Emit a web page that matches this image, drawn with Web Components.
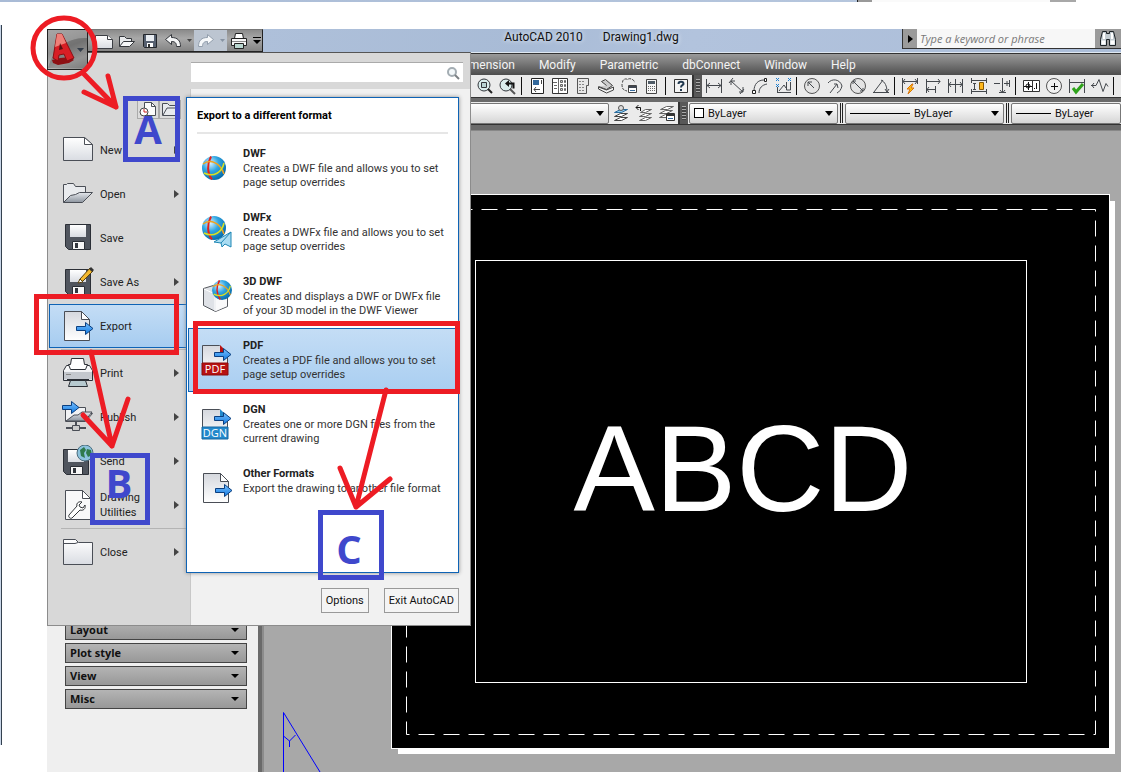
<!DOCTYPE html>
<html lang="en">
<head>
<meta charset="utf-8">
<title>AutoCAD 2010 - Drawing1.dwg</title>
<style>
  html, body { margin: 0; padding: 0; }
  body { background: #fff; font-family: Roboto, "Open Sans", sans-serif; font-size: 11px; color: #1c1c1c; overflow-x: hidden; }
</style>
</head>
<body>
<cad-page></cad-page>

<script>
const define = (name, html) => {
  const tpl = document.createElement('template');
  tpl.innerHTML = html;
  customElements.define(name, class extends HTMLElement {
    constructor() {
      super();
      this.attachShadow({ mode: 'open' }).append(tpl.content.cloneNode(true));
    }
  });
};

/* ---------- icon library ---------- */
const grads = `<defs>
  <linearGradient id="p" x1="0" y1="0" x2="0" y2="1"><stop offset="0" stop-color="#d5d8de"/><stop offset="1" stop-color="#fff"/></linearGradient>
  <linearGradient id="f" x1="0" y1="0" x2="0" y2="1"><stop offset="0" stop-color="#fff"/><stop offset="1" stop-color="#d9dce2"/></linearGradient>
  <linearGradient id="d" x1="0" y1="0" x2="0" y2="1"><stop offset="0" stop-color="#e4e7ec"/><stop offset="1" stop-color="#8d959f"/></linearGradient>
  <linearGradient id="b" x1="0" y1="0" x2="0" y2="1"><stop offset="0" stop-color="#7cc2ff"/><stop offset="1" stop-color="#0f78e0"/></linearGradient>
  <radialGradient id="g" cx=".35" cy=".3" r=".75"><stop offset="0" stop-color="#d8f2ff"/><stop offset=".45" stop-color="#31a6e2"/><stop offset="1" stop-color="#0569a8"/></radialGradient>
</defs>`;
const blueArrow = (x, y) => `<path transform="translate(${x} ${y})" d="M.5 4.500h9v-4l7.500 6-7.500 6v-4h-9z" fill="url(#b)" stroke="#0b3f80"/>`;
const globe = (cx, cy, r) => `<g transform="translate(${cx} ${cy}) scale(${r / 12})"><circle r="12" fill="url(#g)"/>
  <path d="M-3-11.500C-7-4-7 5-2 11.500" fill="none" stroke="#e02020" stroke-width="2"/>
  <path d="M-11-4C-4-9 6-6 10 6" fill="none" stroke="#f2a21c" stroke-width="1.500"/>
  <path d="M-10 5C0 10 8 4 10-5" fill="none" stroke="#d9e021" stroke-width="1.500"/></g>`;
const disk = `<path d="M3.500 3.500h25v25h-22l-3-3z" fill="#50555e" stroke="#2b2f36"/><path d="M8 4h16v12H8z" fill="url(#f)"/><path d="M10.500 20.500h12v8h-12z" fill="#f6f6f6" stroke="#2b2f36"/><path d="M13 22h3v5h-3z" fill="#33373e"/>`;
const sheet = `<path d="M3.500 1.500h17l8 8v21h-25z" fill="url(#p)" stroke="#4a4e56"/><path d="M20.500 1.500v8h8z" fill="#fff" stroke="#4a4e56"/>`;
const tag = (label, color, dark) => `<path d="M1.500 1.500h17l8 8v21h-25z" fill="url(#p)" stroke="#4a4e56"/><path d="M19 1l8 8h-8z" fill="${color}"/><path d="M1 19h26v12H1z" fill="${color}" stroke="${dark}"/><text x="14" y="29" text-anchor="middle" font-family="Open Sans, sans-serif" font-size="11" fill="#fff">${label}</text>${blueArrow(13, 4)}`;
const line = (d, extra = '') => `<path d="${d}" fill="none" stroke="#44484d" ${extra}/>`;

const ICONS = {
  /* 32px menu icons */
  new: [32, `<path d="M1.500 3.500h21l8 7v16h-29z" fill="url(#f)" stroke="#4a4e56"/><path d="M22.500 3.500v7h8z" fill="#fff" stroke="#4a4e56"/>`],
  open: [32, `<path d="M1.500 24.500v-18h3l1-1h6l2 3h10v7" fill="#e9ebee" stroke="#4a4e56"/><path d="M1.500 24.500l7-7 5-1 4-2h13l-10 10z" fill="url(#d)" stroke="#4a4e56"/>`],
  save: [32, `<g transform="translate(0 -1)">${disk}</g>`],
  saveas: [32, disk + `<path d="M18 13l10-11 3 3-10 10-4 1z" fill="#f5b92e" stroke="#5b4310"/><path d="M18 13l3 3-5 1z" fill="#fff" stroke="#5b4310"/><path d="M27 3l2-2 3 3-2 2z" fill="#333"/>`],
  export: [32, `<g transform="translate(-1 0)">${sheet}</g>` + blueArrow(14, 12)],
  print: [32, `<path d="M4.500 8.500h23l3 5v10h-29v-10z" fill="url(#f)" stroke="#2b2f36"/><path d="M6.500 7.500l2 5h15l2-5h-3l-1-6h-12l-1 6z" fill="#fff" stroke="#2b2f36"/><path d="M2 15h28v7H2z" fill="#c4c8ce"/><path d="M4 17.500h5" stroke="#888"/><path d="M5 22h22v2H5z" fill="#2b2f36"/><path d="M8.500 23.500h15l2 6h-19z" fill="#b7cad0" stroke="#2b2f36"/>`],
  publish: [32, `<path d="M3.500 20.500v-14h20v6h7l-7 8z" fill="#f1f2f4" stroke="#4a4e56"/><path d="M4 20l8-6h4l4-3h10l-7 9z" fill="url(#d)" stroke="#4a4e56"/><path d="M14 21v4M4 27h20" stroke="#4a4e56" stroke-width="2"/><path d="M10.500 24.500h7v5h-7z" fill="#ccc" stroke="#4a4e56"/>${blueArrow(0, 0)}`],
  send: [32, `<g transform="translate(-2 1)">${disk}</g><circle cx="23" cy="8" r="8" fill="#8cc3dd" stroke="#4b6b7c"/><path d="M18 5l4-3 2 3-2 3 1 5-4-2zM25 4l4 1 1 5-4 2-2-4z" fill="#2f7a4b"/>`],
  utilities: [32, `<path d="M3.500 1.500h17l8 8v21h-25z" fill="#f8f8f9" stroke="#4a4e56"/><path d="M20.500 1.500v8h8z" fill="#fff" stroke="#4a4e56"/><path d="M7 26l8-9c-1-3 2-5 5-4l-3 3 1 2 3 1 2-3c1 4-2 6-5 5l-8 8c-2 1-4-1-3-3z" fill="#fff" stroke="#33363b"/>`],
  close: [32, `<path d="M1.500 28.500v-25h12l3 3h14v22z" fill="url(#f)" stroke="#4a4e56"/><path d="M2 7.500h11l3-1" fill="none" stroke="#4a4e56"/>`],
  dwf: [32, globe(13, 16, 12)],
  dwfx: [32, globe(13, 12, 12) + `<path d="M13 26l17-10v15l-6-3-3 3-1-4z" fill="#a9dcf2" stroke="#1f87b5"/><path d="M20 27l10-11" stroke="#1f87b5"/>`],
  dwf3d: [32, `<path d="M2.500 8.500l13-4 11 4v18l-12 5-12-6z" fill="#dfe2e7" stroke="#55585e"/><path d="M3 9l11 5v17" fill="none" stroke="#fff"/><path d="M15 14l11-5v17l-11 5z" fill="#f9f9fa"/>` + globe(21, 10, 10)],
  pdf: [32, tag('PDF', '#b81212', '#8c0b0b')],
  dgn: [32, tag('DGN', '#2389cc', '#1766a0')],
  /* quick-access icons */
  qnew: [20, `<path d="M1.500 4.500h12l5 4v9h-17z" fill="url(#f)" stroke="#3b3e44"/><path d="M13.500 4.500v4h5" fill="#fff" stroke="#3b3e44"/>`],
  qopen: [20, `<path d="M2.500 15.500v-10h5l2 2h5v3" fill="#e8eaec" stroke="#33363b"/><path d="M2.500 15.500l4-5h11l-5 5z" fill="#f5f6f7" stroke="#33363b"/>`],
  qsave: [20, `<path d="M3.500 3.500h13v13h-12l-1-1z" fill="#566070" stroke="#23262b"/><path d="M6 4h8v6H6z" fill="#e9edf2"/><path d="M7 12h6v4H7z" fill="#fff"/><path d="M8 13h2v3H8z" fill="#333"/>`],
  qundo: [20, `<path d="M2.500 8.500l6-5v3c6 0 9 3 9 9h-4c0-3-1-5-5-5v3z" fill="#f4f5f6" stroke="#33363b"/>`],
  qredo: [20, `<path d="M17.500 8.500l-6-5v3c-6 0-9 3-9 9h4c0-3 1-5 5-5v3z" fill="#f6f8fa" stroke="#929eac"/>`],
  qprint: [20, `<path d="M5.500 7.500l1-5h7l1 5" fill="#fff" stroke="#222"/><path d="M2.500 7.500h15v7h-15z" fill="#f7f7f7" stroke="#222"/><path d="M5.500 12.500h9v5h-9z" fill="#b9d6cf" stroke="#222"/><path d="M3 10.500h14" stroke="#888"/>`],
  binoculars: [20, `<path d="M4.500 2.500h4v2h3v-2h4l2 8v6h-6v-6h-3v6h-6v-6z" fill="#c3ccd2" stroke="#1c2226"/><path d="M3.500 11.500h4v4h-4zM12.500 11.500h4v4h-4z" fill="#fff"/><path d="M6 4v6M14 4v6" stroke="#fff" stroke-width="2"/>`],
  find: [20, `<circle cx="9" cy="9" r="4" fill="#f4f9fb" stroke="#a4adb3" stroke-width="2"/><path d="M12 12l4 4" stroke="#7c8184" stroke-width="2"/>`],
  recent: [20, `<path d="M6.500 1.500h7l4 4v9h-11z" fill="#fbfbfb" stroke="#4a4e56"/><path d="M13.500 1.500v4h4" fill="none" stroke="#4a4e56"/><circle cx="6" cy="11" r="4" fill="#fff" stroke="#444"/><path d="M6 8v3h3" fill="none" stroke="#c22"/>`],
  folder: [20, `<path d="M2.500 14.500v-12h5l2 2h9v10z" fill="#e8eaed" stroke="#4a4e56"/><path d="M3 14l4-7h11" fill="none" stroke="#4a4e56"/>`],
  /* toolbar icons */
  zoomwin: [20, `<circle cx="9" cy="9" r="6" fill="#d9eded" stroke="#33363b"/><path d="M6.500 6.500h5v5h-5z" fill="#b8d4d4" stroke="#33363b"/><path d="M13 13l4 4" stroke="#222" stroke-width="2"/>`],
  zoomprev: [20, `<circle cx="8" cy="9" r="6" fill="#d9eded" stroke="#33363b"/><path d="M12 13l5 5" stroke="#555" stroke-width="2"/><path d="M9.500 7.500h6v5" fill="none" stroke="#111" stroke-width="2"/><path d="M11 4v7L7 7.500z" fill="#111"/>`],
  props: [20, `<path d="M4.500 2.500h12v15h-12z" fill="#fff" stroke="#222"/><path d="M6 4h6v5H6z" fill="#33689b"/><path d="M14.500 4v4M7 13.500h6M9 11l-2 2.500L9 16" fill="none" stroke="#444"/>`],
  dcenter: [20, `<path d="M2.500 2.500h15v15h-15z" fill="#fff" stroke="#333"/><path d="M8.500 3v14M3 6.500h4M4 9.500h3M4 12.500h3" stroke="#666"/>${[4, 8, 12].map(y => `<path d="M10.500 ${y + .5}h2v2h-2zM14.500 ${y + .5}h1v2h-1z" fill="#ccc" stroke="#666"/>`).join('')}`],
  palettes: [20, `<path d="M4.500 2.500h11v7h-2v8h-9z" fill="#e8e8e8" stroke="#555"/><path d="M6 5.500h6M6 8.500h6M6 11.500h6M6 14.500h6" stroke="#888" stroke-dasharray="2 1"/>`],
  sheetset: [20, `<path d="M2.500 10.500l8 3 6-4-7-6-4 2 5 4" fill="#ccc" stroke="#444"/><path d="M2.500 11v2l8 4 7-3v-3l-7 3z" fill="#f4f4f4" stroke="#444"/>`],
  markup: [20, `<path d="M3.500 6.500c0-4 4-4 5-3 2-2 7 0 7 3M3 8c0 6 2 6 5 7" fill="none" stroke="#444" stroke-dasharray="3 1"/><path d="M9.500 9.500h8v7h-8z" fill="#fff" stroke="#444"/><path d="M10 10h8v2h-8z" fill="#3f4650"/><path d="M11 14.500h5" stroke="#33689b"/>`],
  calc: [20, `<path d="M4.500 3.500h10v14h-10z" fill="#f6f6f6" stroke="#444"/><path d="M6 5h7v3H6z" fill="#4f5b66"/><path d="M6 10.500h7M6 12.500h7M6 14.500h7" stroke="#666" stroke-dasharray="1 1"/>`],
  help: [20, `<path d="M3.500 3.500h13v13h-13z" fill="#f4f4f4" stroke="#333"/><path d="M7.500 8c0-3 5-3 5 0 0 1-2.500 1-2.500 3.500M10 13v2" fill="none" stroke="#223a50" stroke-width="2"/>`],
  dlin: [20, line('M2.500 3v14M17.500 3v14M3 9.500h14M6 7L3 9.500 6 12M14 7l3 2.500-3 2.500')],
  dalign: [20, line('M4 5l12 11M2 7l4-5M13 18l4-5M4 9V5h4M16 11v5h-4')],
  darc: [20, line('M4 15C4 8 8 4 14 4M9 17c0-5 3-8 8-9') + `<path d="M2.500 14.500h3v3h-3zM14.500 2.500h2v3h-2z" fill="#fff" stroke="#222"/>`],
  dord: [20, line('M4.500 11v6M4 16.500h14M6 15l5-6 2 3M13.500 6v8h4V6') + `<path d="M3 2l3 3m0-3L3 5M15 2l3 3m0-3l-3 3M3 8l3 3m0-3l-3 3" stroke="#1e7fd0"/>`],
  drad: [20, `<circle cx="10" cy="10" r="7.500" fill="#e4e4e4" stroke="#555"/>` + line('M12 12L6 6M6 10V6h4')],
  djog: [20, line('M3 7c4-5 12-4 14 3-1 4-3 6-5 7M5 17l7-9 1 4M9 8h3')],
  ddia: [20, `<circle cx="10" cy="10" r="7.500" fill="#e4e4e4" stroke="#555"/>` + line('M5 5l10 10M5 8V5h3M15 12v3h-3')],
  dang: [20, line('M2 16.500h16M3 16L12 4M10 4c4 2 6 6 6 12M14 13l2 3 2-3')],
  quick: [20, line('M2.500 2v15M17.500 2v6M3 5.500h14M5 3L3 5.500 5 8M15 3l2 2.500L15 8') + `<path d="M12 8l-5 5h3l-2 5 6-6h-3l2-4z" fill="#ffc20e" stroke="#d9720c"/>`],
  dbase: [20, line('M3.500 3v14M12.500 10v7M3 5.500h14M3 13.500h9M15 3l2 2.500L15 8M6 11l-2 2.500L6 16')],
  dcont: [20, line('M2.500 3v14M9.500 3v14M16.500 3v14M3 8.500h14M5 6L3 8.500 5 11M14 6l2 2.500-2 2.500')],
  dspace: [20, line('M2 4.500h16M2 15.500h16M2.500 2v5M17.500 2v5M2.500 13v5M17.500 13v5M5.500 7v7M4 7.500h3M4 13.500h3') + `<path d="M10.500 6.500h4v7h-4z" fill="#ffb81c" stroke="#8a5a00"/>`],
  dbreak: [20, line('M2 7.500h6M12 7.500h5M10.500 2v15M8 14l2.500 3 2.500-3M17.500 4v7M15 5v5M7 16.500h7')],
  tol: [20, `<path d="M2.500 4.500h16v11h-16z" fill="#fff" stroke="#333"/><path d="M11.500 5v10" stroke="#333"/><circle cx="7" cy="10" r="2" fill="none" stroke="#111"/><path d="M3 10.500h8M7.500 6v8M13 12.500h1M15.500 7v6" stroke="#111"/>`],
  center: [20, `<circle cx="10" cy="10" r="7.500" fill="#f2f2f2" stroke="#555"/><path d="M7 10.500h7M10.500 7v7" stroke="#111"/>`],
  inspect: [20, line('M2.500 3v14M17.500 3v14M3 6.500h14') + `<path d="M6 12l3 4 7-8" fill="none" stroke="#2fa31b" stroke-width="3"/>`],
  jogline: [20, line('M1 9.500h5l3-6 4 12 3-8 2 3M4 7L2 9.500 4 12')],
  layers: [20, `<path d="M3.500 17.500l6-3h7l-6 3zM3.500 13.500l6-3h7l-6 3z" fill="#fff" stroke="#444"/><path d="M3.500 9.500l6-3h7l-6 3z" fill="#8ccbf2" stroke="#2b6c9c"/><circle cx="10" cy="5" r="2.500" fill="#ddd" stroke="#555"/>`],
  layerprev: [20, `<path d="M5.500 17.500l6-3h6l-6 3zM5.500 13.500l6-3h6l-6 3zM6.500 9.500l5-3h6l-6 3z" fill="#fff" stroke="#666"/><path d="M6.500 8V4.500H2M4.500 2L2 4.500 4.500 7" fill="none" stroke="#111"/>`],
  layerstate: [20, `<path d="M2.500 14.500l6-3h7l-6 3zM2.500 10.500l6-3h7l-6 3zM3.500 6.500l6-3h7l-6 3z" fill="#fff" stroke="#666"/><path d="M9.500 10.500h8v7h-8z" fill="#fff" stroke="#333"/><path d="M10 11h8v2h-8z" fill="#333"/><path d="M11 15.500h5" stroke="#33689b"/>`],
};
customElements.define('cad-icon', class extends HTMLElement {
  connectedCallback() {
    if (this.shadowRoot) return;
    const [box, art] = ICONS[this.getAttribute('name')];
    this.attachShadow({ mode: 'open' }).innerHTML =
      `<style>:host{display:block;flex:none;width:${box}px;height:${box}px}svg{display:block;width:100%;height:100%}</style>
       <svg viewBox="0 0 ${box} ${box}" aria-hidden="true">${grads}${art}</svg>`;
  }
});

/* ---------- title bar ---------- */
define('title-bar', `
<style>
  :host { display: flex; height: 23px; background: linear-gradient(100deg, #b3c4dd 0, #a8bbd6 45%, #b2c3dd 60%, #abbdd8 100%); border-bottom: 1px solid #dfe8f2; }
  .quick { box-sizing: border-box; width: 216px; padding-left: 44px; display: flex; align-items: center; background: linear-gradient(#8b8b8b, #a8a8a8 40%, #848484); border: 1px solid #222; border-top-color: #777; }
  button { border: 0; padding: 0; background: none; width: 23px; height: 21px; display: grid; place-items: center; flex: none; }
  .faded { background: #bcc5d1; }
  .drop { width: 10px; }
  .last { width: 14px; }
  h1 { flex: 1; margin: 0; padding-left: 18px; display: flex; justify-content: center; gap: 20px; font-size: 12px; line-height: 16px; font-weight: 400; color: #111; text-shadow: 0 0 5px #fff; }
  form { display: flex; width: 219px; height: 20px; background: #9b9b9b; box-sizing: border-box; border-left: 1px solid #333; border-bottom: 1px solid #333; }
  form .go { width: 14px; height: 19px; }
  input { flex: 1; min-width: 0; border: 0; padding: 0 3px; background: #f7f7f7; font: italic 11px "Open Sans", sans-serif; }
  input::placeholder { color: #777; }
  form .find { width: 26px; height: 19px; }
</style>
<div class="quick">
  <button aria-label="New"><cad-icon name="qnew"></cad-icon></button>
  <button aria-label="Open"><cad-icon name="qopen"></cad-icon></button>
  <button aria-label="Save"><cad-icon name="qsave"></cad-icon></button>
  <button aria-label="Undo"><cad-icon name="qundo"></cad-icon></button>
  <button class="drop" aria-label="Undo list"><svg width="5" height="3"><path d="M0 0h5L2.500 3z" fill="#444"/></svg></button>
  <button class="faded" aria-label="Redo"><cad-icon name="qredo"></cad-icon></button>
  <button class="drop faded" aria-label="Redo list"><svg width="5" height="3"><path d="M0 0h5L2.500 3z" fill="#8793a3"/></svg></button>
  <button aria-label="Plot"><cad-icon name="qprint"></cad-icon></button>
  <button class="last" aria-label="Customize"><svg width="8" height="7"><path d="M0 0h8v1H0zM0 3h8L4 7z" fill="#000"/></svg></button>
</div>
<h1><span>AutoCAD 2010</span><span>Drawing1.dwg</span></h1>
<form>
  <button type="button" class="go" aria-label="Collapse search"><svg width="5" height="8"><path d="M0 0l5 4-5 4z"/></svg></button>
  <input placeholder="Type a keyword or phrase" aria-label="Search help">
  <button type="button" class="find" aria-label="Search"><cad-icon name="binoculars"></cad-icon></button>
</form>`);

/* ---------- menu bar ---------- */
define('menu-bar', `
<style>
  :host { display: flex; align-items: center; gap: 24px; height: 21px; padding-left: 411px; border-top: 1px solid #333; background: linear-gradient(#9a9a9a, #4e4e4e); }
  ::slotted(a) { color: #f4f4f4; font-size: 12px; line-height: 16px; text-decoration: none; }
</style><slot></slot>`);

/* ---------- toolbars ---------- */
define('tool-button', `
<style>
  :host { display: block; flex: none; width: 23px; }
  button { display: grid; place-items: center; width: 100%; height: 22px; border: 0; padding: 0; background: none; }
</style><button><slot></slot></button>`);
define('tool-rule', `<style>:host{flex:none;width:1px;height:18px;margin:0 3px 0 2px;background:#111;display:block}</style>`);
define('tool-grip', `<style>:host{flex:none;display:block;width:8px;height:22px;background:#585858}i{display:block;width:4px;height:14px;margin:4px 2px;background:repeating-linear-gradient(#aaa 0 1px,#444 1px 3px)}</style><i></i>`);
define('tool-strip', `
<style>
  :host { box-sizing: border-box; display: flex; align-items: center; height: 23px; background: #ebebeb; border-bottom: 1px solid #333; overflow: hidden; }
</style><slot></slot>`);
define('prop-combo', `
<style>
  :host { display: block; box-sizing: border-box; height: 21px; border: 1px solid #777; border-radius: 2px; background: linear-gradient(#fff, #d6d6d6); }
  label { display: flex; align-items: center; gap: 4px; height: 19px; padding: 0 4px; }
  select { appearance: none; flex: 1; min-width: 0; border: 0; padding: 0; background: none; font: 11px Roboto, sans-serif; color: #111; }
  svg { flex: none; }
  :host([open-end]) svg { display: none; }
</style>
<label><slot name="sample"></slot><select aria-label="Property"></select><svg width="8" height="5"><path d="M0 0h8L4 5z"/></svg></label>`);

/* ---------- property palette ---------- */
define('palette-section', `
<style>
  :host { display: block; }
  button { box-sizing: border-box; width: 100%; height: 20px; display: flex; align-items: center; justify-content: space-between; border: 1px solid #444; padding: 0 7px 0 4px; background: linear-gradient(#b4b4b4, #989898); font: 700 11px/18px "Open Sans", sans-serif; color: #111; }
</style><button><slot></slot><svg width="8" height="4"><path d="M0 0h8L4 4z"/></svg></button>`);
define('property-palette', `
<style>
  :host { box-sizing: border-box; display: flex; flex-direction: column; justify-content: flex-end; gap: 3px; width: 215px; padding: 0 11px 63px 18px; background: #efefef; border-right: 4px solid #6a6a6a; }
</style><slot></slot>`);

/* ---------- drawing area ---------- */
define('drawing-area', `
<style>
  :host { flex: 1; display: flex; background: #a8a8a8; position: relative; border-left: 2px solid #8c8c8c; }
  .paper { flex: 1; box-sizing: border-box; display: grid; margin: 63px 11px 23px 127px; padding: 14px; background: #000; border: 1px solid #fff; box-shadow: 6px 6px 0 -1px #fff; }
  .margin, .text { grid-area: 1 / 1; }
  .margin { width: 100%; height: 100%; display: block; overflow: visible; }
  .text { margin: 51px 68px 51px 69px; border: 1px solid #fff; display: grid; place-items: center; padding: 0 16px 6px 0; font: 122px/1 "Liberation Sans", Arial, sans-serif; color: #fff; }
  .ucs { position: absolute; left: 19px; bottom: 0; }
</style>
<div class="paper">
  <svg class="margin"><rect x=".5" y=".5" width="100%" height="100%" fill="none" stroke="#fff" stroke-dasharray="16 9"/></svg>
  <div class="text"><slot></slot></div>
</div>
<svg class="ucs" width="40" height="60" fill="none" stroke="#00f"><path d="M.5 60V.5L37 60M.5 24l6 5 6-6M6.500 29v6"/></svg>`);

/* ---------- application menu ---------- */
define('menu-entry', `
<style>
  :host { display: block; }
  button { box-sizing: border-box; display: flex; align-items: center; gap: 6px; width: 100%; height: 44px; padding: 0 8px 0 12px; border: 1px solid transparent; border-width: 1px 0 1px 1px; background: none; font: 11px/15px Roboto, sans-serif; color: #222; text-align: left; }
  span { flex: 1; }
  svg { display: none; }
  :host([more]) svg { display: block; }
  :host([active]) button { border-color: #0e63b5; background: linear-gradient(#c4ddf5, #a6ccf0); }
</style>
<button><slot name="icon"></slot><span><slot></slot></span><svg width="5" height="8"><path d="M0 0l5 4-5 4z" fill="#444"/></svg></button>`);
define('menu-divider', `<style>:host{display:block;height:1px;margin:1px 0 1px 12px;background:#b4b4b4}</style>`);
define('export-entry', `
<style>
  :host { display: block; }
  button { box-sizing: border-box; width: 100%; height: 64px; display: flex; gap: 10px; align-items: flex-start; padding: 9px 4px 9px 12px; border: 1px solid transparent; background: none; text-align: left; white-space: nowrap; font: 11px/14px Roboto, sans-serif; color: #333; }
  b { display: block; line-height: 16px; color: #222; }
  .icon { padding-top: 6px; }
  :host([active]) button { border-color: #0e63b5; border-right: 0; background: linear-gradient(#c4ddf5, #a9cef1); }
</style>
<button><span class="icon"><slot name="icon"></slot></span><span><b><slot name="title"></slot></b><slot></slot></span></button>`);
define('app-menu', `
<style>
  :host { position: absolute; left: 0; top: 23px; box-sizing: border-box; width: 424px; display: flex; flex-direction: column; background: #d8d8d8; border: 1px solid #8c8c8c; border-top-color: #555; }
  .search { height: 36px; padding: 9px 7px 0 143px; box-sizing: border-box; display: flex; }
  .search label { flex: 1; display: flex; height: 20px; background: #fff; border-top: 1px solid #aaa; box-sizing: border-box; align-items: center; }
  .search input { flex: 1; border: 0; min-width: 0; background: none; }
  .body { display: flex; }
  .entries { width: 138px; padding: 11px 0 0 1px; }
  .views { display: flex; justify-content: flex-end; height: 28px; padding-right: 6px; }
  .views button { width: 22px; height: 19px; padding: 0; border: 1px solid #aaa; background: #dcdcdc; display: grid; place-items: center; }
  .side { flex: 1; background: #f1f1f1; box-shadow: inset 3px 0 0 #d8d8d8, inset 4px 0 0 #c8c8c8; padding: 8px 11px 0 0; }
  .panel { box-sizing: border-box; height: 476px; margin-left: -1px; background: #fff; border: 1px solid #0e63b5; box-shadow: 0 0 4px #8a8a8a; padding-left: 1px; }
  h2 { margin: 0 10px 2px 9px; padding: 10px 0; font-size: 11px; line-height: 16px; color: #000; border-bottom: 2px solid #e6e6e6; height: 14px; }
  .foot { display: flex; justify-content: flex-end; gap: 15px; padding: 15px 0 12px 0; }
  .foot button { height: 25px; padding: 0 4px; border: 1px solid #999; background: #f4f4f4; font: 11px Roboto, sans-serif; color: #111; }
</style>
<div class="search"><label><input aria-label="Search menu"><cad-icon name="find"></cad-icon></label></div>
<div class="body">
  <div class="entries">
    <div class="views"><button aria-label="Recent documents"><cad-icon name="recent"></cad-icon></button><button aria-label="Open documents"><cad-icon name="folder"></cad-icon></button></div>
    <slot name="entry"></slot>
  </div>
  <div class="side">
    <div class="panel"><h2>Export to a different format</h2><slot></slot></div>
    <div class="foot"><button>Options</button><button>Exit AutoCAD</button></div>
  </div>
</div>`);
define('app-button', `
<style>
  :host { position: absolute; left: 0; top: 0; }
  button { display: block; width: 41px; height: 41px; padding: 0; border: 1px solid #222; background: linear-gradient(160deg, #9a9a9a, #7a7a7a 45%, #b3b3b3 75%, #888); }
  svg { display: block; }
</style>
<button aria-label="Application menu"><svg width="39" height="39" viewBox="0 0 39 39">
  <path d="M0 0h39v8C20 7 6 18 0 38z" fill="#b9b9b9" opacity=".4"/><path d="M0 38C5 19 20 7 39 8v30z" fill="#666" opacity=".4"/>
  <path d="M4 30l8-2 10-1 4 3-5 3-11 2-5-2z" fill="#8d1014"/>
  <path d="M5 28L9 4h5l12 24-7 3-3-7-5 1-1 6z" fill="#d81e25" stroke="#8b0f13"/><path d="M9 4h5l4 9-11 4z" fill="#ee7f78"/><path d="M11 20l1-7 3 6z" fill="#571012"/>
  <path d="M29 18h7l-3.500 4z" fill="#333d4a"/></svg></button>`);

/* ---------- tutorial mark-up drawn over the window ---------- */
define('markup-layer', `
<style>
  :host { position: absolute; left: 0; top: 0; pointer-events: none; }
  svg { display: block; }
  text { font: 700 40px "Open Sans", sans-serif; fill: #3f48cc; stroke: none; text-anchor: middle; }
</style>
<svg width="480" height="600" fill="none" stroke-width="5">
  <g stroke="#ed1c24" stroke-linecap="round">
    <ellipse cx="64" cy="48" rx="31" ry="30"/>
    <path d="M84 74l32 33M84 92l32 15M108 76l8 31"/>
    <path d="M36.500 296.500h140v56h-140z"/>
    <path d="M195.500 323.500h262v68h-262z"/>
    <path d="M91 352l21 94M83 415l29 31M128 399l-16 47"/>
    <path d="M386 390l-30 117M340 468l16 39M390 479l-34 28"/>
  </g>
  <g stroke="#3f48cc">
    <path d="M125.500 98.500h52v61h-52zM92.500 455.500h55v67h-55zM320.500 512.500h61v65h-61z"/>
  </g>
  <text x="148" y="144">A</text><text x="119" y="498">B</text><text x="349" y="564">C</text>
</svg>`);

/* ---------- whole page ---------- */
const tools = s => s.split(' ').map(n => n === '|' ? '<tool-rule></tool-rule>' : n === '#' ? '<tool-grip></tool-grip>' : `<tool-button><cad-icon name="${n}"></cad-icon></tool-button>`).join('');
const entry = (icon, label, attr = 'more') => `<menu-entry slot="entry" ${attr}><cad-icon slot="icon" name="${icon}"></cad-icon>${label}</menu-entry>`;
const exp = (icon, title, text, attr = '') => `<export-entry ${attr}><cad-icon slot="icon" name="${icon}"></cad-icon><span slot="title">${title}</span>${text}</export-entry>`;

define('cad-page', `
<style>
  :host { display: block; position: relative; }
  .strip { height: 2px; background: linear-gradient(90deg, #a9bbd6, #b9c9df); display: flex; justify-content: flex-end; }
  .strip i { display: block; }
  .frame { display: flex; }
  .edge { width: 1px; margin: 23px 45px 28px 0; border-left: 1px solid #c9d6e8; background: #34414f; }
  .window { position: relative; flex: 1; min-width: 0; margin: 27px 8px 1px 0; display: flex; flex-direction: column; min-height: calc(100vh - 30px); background: #6a6a6a; }
  .second { margin-top: 4px; }
  .work { flex: 1; display: flex; margin-top: 5px; border-top: 1px solid #888; }
  .sp1 { flex: none; width: 426px; }
  .sp2 { flex: none; width: 402px; }
  .layer { width: 160px; }
  .grow { flex: 1; min-width: 0; }
  .color { width: 149px; margin-left: 1px; } .ltype { width: 159px; }
  .swatch { width: 8px; height: 8px; border: 1px solid #000; background: #fff; }
  .rule { height: 1px; width: 60px; background: #000; }
  .short { width: 35px; }
  .twin { width: 1px; height: 20px; margin: 0 2px; border: solid #222; border-width: 0 1px; flex: none; }
  .gap { width: 2px; flex: none; height: 24px; background: #333; }
</style>
<div class="strip"><i style="width:1px;background:#222"></i><i style="width:14px;background:#999"></i><i style="width:178px;background:#fafafa"></i><i style="width:26px;background:#a8a8a8"></i><i style="width:53px;background:#fff"></i></div>
<div class="frame">
  <div class="edge"></div>
  <main class="window">
    <title-bar></title-bar>
    <menu-bar><a href="#">Dimension</a><a href="#">Modify</a><a href="#">Parametric</a><a href="#">dbConnect</a><a href="#">Window</a><a href="#">Help</a></menu-bar>
    <tool-strip><span class="sp1"></span>${tools('zoomwin zoomprev | props dcenter palettes sheetset markup calc | help')}<i class="gap"></i>${tools('# dlin dalign darc dord | drad djog ddia dang | quick dbase dcont dspace dbreak | tol center inspect jogline |')}</tool-strip>
    <tool-strip class="second"><span class="sp2"></span><prop-combo class="layer"></prop-combo>${tools('layers layerprev layerstate')}<i class="gap"></i>${tools('#')}
      <prop-combo class="color" value="ByLayer"><div slot="sample" class="swatch"></div></prop-combo><span class="twin"></span>
      <prop-combo class="ltype" value="ByLayer"><div slot="sample" class="rule"></div></prop-combo><span class="twin"></span>
      <prop-combo class="grow" value="ByLayer" open-end><div slot="sample" class="rule short"></div></prop-combo></tool-strip>
    <div class="work">
      <property-palette><palette-section>Layout</palette-section><palette-section>Plot style</palette-section><palette-section>View</palette-section><palette-section>Misc</palette-section></property-palette>
      <drawing-area>ABCD</drawing-area>
    </div>
    <app-menu>
      ${entry('new', 'New')}${entry('open', 'Open')}${entry('save', 'Save', '')}${entry('saveas', 'Save As')}${entry('export', 'Export', 'active')}
      <menu-divider slot="entry"></menu-divider>
      ${entry('print', 'Print')}${entry('publish', 'Publish')}${entry('send', 'Send')}${entry('utilities', 'Drawing<br>Utilities')}
      <menu-divider slot="entry"></menu-divider>
      ${entry('close', 'Close')}
      ${exp('dwf', 'DWF', 'Creates a DWF file and allows you to set<br>page setup overrides')}
      ${exp('dwfx', 'DWFx', 'Creates a DWFx file and allows you to set<br>page setup overrides')}
      ${exp('dwf3d', '3D DWF', 'Creates and displays a DWF or DWFx file<br>of your 3D model in the DWF Viewer')}
      ${exp('pdf', 'PDF', 'Creates a PDF file and allows you to set<br>page setup overrides', 'active')}
      ${exp('dgn', 'DGN', 'Creates one or more DGN files from the<br>current drawing')}
      ${exp('export', 'Other Formats', 'Export the drawing to another file format')}
    </app-menu>
    <app-button></app-button>
  </main>
</div>
<markup-layer></markup-layer>`);

/* fill each combo with its current value */
document.querySelector('cad-page').shadowRoot.querySelectorAll('prop-combo').forEach(c => {
  const value = c.getAttribute('value') || '';
  c.shadowRoot.querySelector('select').append(new Option(value, value));
});
</script>
</body>
</html>
